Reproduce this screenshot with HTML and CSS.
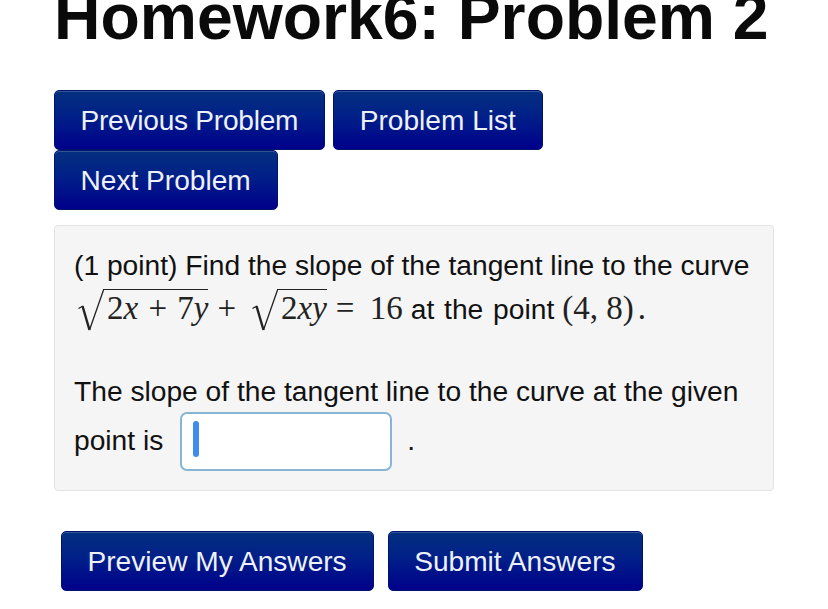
FILE: index.html
```html
<!DOCTYPE html>
<html lang="en">
<head>
<meta charset="utf-8">
<title>Homework6: Problem 2</title>
<link rel="stylesheet" href="styles.css">
</head>
<body>
<main class="page">
  <h1 class="title">Homework6: Problem 2</h1>
  <nav class="nav">
    <a class="btn tight">Previous Problem</a>
    <a class="btn">Problem List</a>
    <a class="btn">Next Problem</a>
  </nav>
  <section class="well">
    <p class="line">(1 point) Find the slope of the tangent line to the curve</p>
    <div class="eq">
      <span class="root first">
        <svg class="surd" width="27" height="44" viewBox="0 0 27 44"><path class="surd-thin" d="M0.5 19.5 L5 17 M11.5 41 L25.5 1"/><path class="surd-thick" d="M4.5 17 L11.5 41"/></svg>
        <span class="radicand m">2<i>x</i> + 7<i>y</i></span>
      </span>
      <span class="m plus">+</span>
      <span class="root">
        <svg class="surd" width="27" height="44" viewBox="0 0 27 44"><path class="surd-thin" d="M0.5 19.5 L5 17 M11.5 41 L25.5 1"/><path class="surd-thick" d="M4.5 17 L11.5 41"/></svg>
        <span class="radicand m">2<i>xy</i></span>
      </span>
      <span class="m equals">= 16</span>
      <span class="words">at the point</span>
      <span class="m point">(4, 8)</span>
      <span class="m dot">.</span>
    </div>
    <p class="line para">The slope of the tangent line to the curve at the given</p>
    <div class="answer">
      <span class="answer-text">point is</span>
      <span class="field"><span class="caret"></span></span>
      <span class="answer-text period">.</span>
    </div>
  </section>
  <div class="actions">
    <button class="btn" type="button">Preview My Answers</button>
    <button class="btn" type="button">Submit Answers</button>
  </div>
</main>
</body>
</html>
```
FILE: styles.css
```css
* { box-sizing: border-box; }
html, body { margin: 0; padding: 0; background: #fff; overflow: hidden; }
body { width: 828px; height: 609px; font-family: "Liberation Sans", Arial, sans-serif; color: #111; }
.page { padding: 0 54px; }
.title {
  margin: -16px 0 0 0;
  font-size: 64.3px;
  line-height: 67px;
  font-weight: 700;
  color: #0a0a0a;
  white-space: nowrap;
}
.nav {
  display: flex;
  flex-wrap: wrap;
  column-gap: 8px;
  margin-top: 39px;
  width: 700px;
}
.btn {
  display: block;
  height: 60px;
  padding: 2px 26px 0 25.5px;
  border: 1px solid #00146e;
  border-radius: 5px;
  background: linear-gradient(#04307f 0, #001f88 45%, #00008b 100%);
  box-shadow: inset 0 1px 0 rgba(255,255,255,.18);
  color: #eef1f8;
  font: 28.1px/56px "Liberation Sans", Arial, sans-serif;
  white-space: nowrap;
}
.tight { letter-spacing: -.25px; }
.well {
  margin-top: 15px;
  width: 720px;
  height: 266px;
  padding: 19px 19px 0;
  background: #f5f5f5;
  border: 1px solid #e3e3e3;
  border-radius: 4px;
  font-size: 28.2px;
}
.line { margin: 0; line-height: 40px; white-space: nowrap; }
.eq { height: 46px; padding-top: 4px; display: flex; align-items: baseline; white-space: nowrap; line-height: 36px; }
.m { font-family: "Liberation Serif", "Times New Roman", serif; font-size: 33px; color: #222; }
.root { position: relative; display: block; padding-left: 25px; }
.first { margin-left: 4px; }
.surd { position: absolute; left: 0; top: 0; }
.surd-thin { fill: none; stroke: #222; stroke-width: 1.3; }
.surd-thick { fill: none; stroke: #222; stroke-width: 2.4; }
.radicand { display: block; border-top: 1.5px solid #222; padding-left: 4px; line-height: 36px; word-spacing: 2px; }
.plus { margin: 0 16px 0 9px; }
.equals { margin-left: 9px; word-spacing: 7px; }
.words { margin-left: 8px; word-spacing: 2px; }
.point { margin-left: 8px; }
.dot { margin-left: 4px; }
.para { margin-top: 40px; }
.answer { display: flex; align-items: center; height: 60px; }
.answer-text { padding-bottom: 2px; }
.field {
  width: 212px;
  height: 59px;
  margin-left: 17px;
  padding: 7px 11px;
  align-self: flex-end;
  background: #fff;
  border: 2px solid #87b6d4;
  border-radius: 7px;
  display: block;
}
.caret { display: block; width: 6px; height: 36px; border-radius: 3px; background: #3f8cf0; }
.period { margin-left: 15px; }
.actions { display: flex; gap: 14px; margin: 40px 0 0 7px; }
```
